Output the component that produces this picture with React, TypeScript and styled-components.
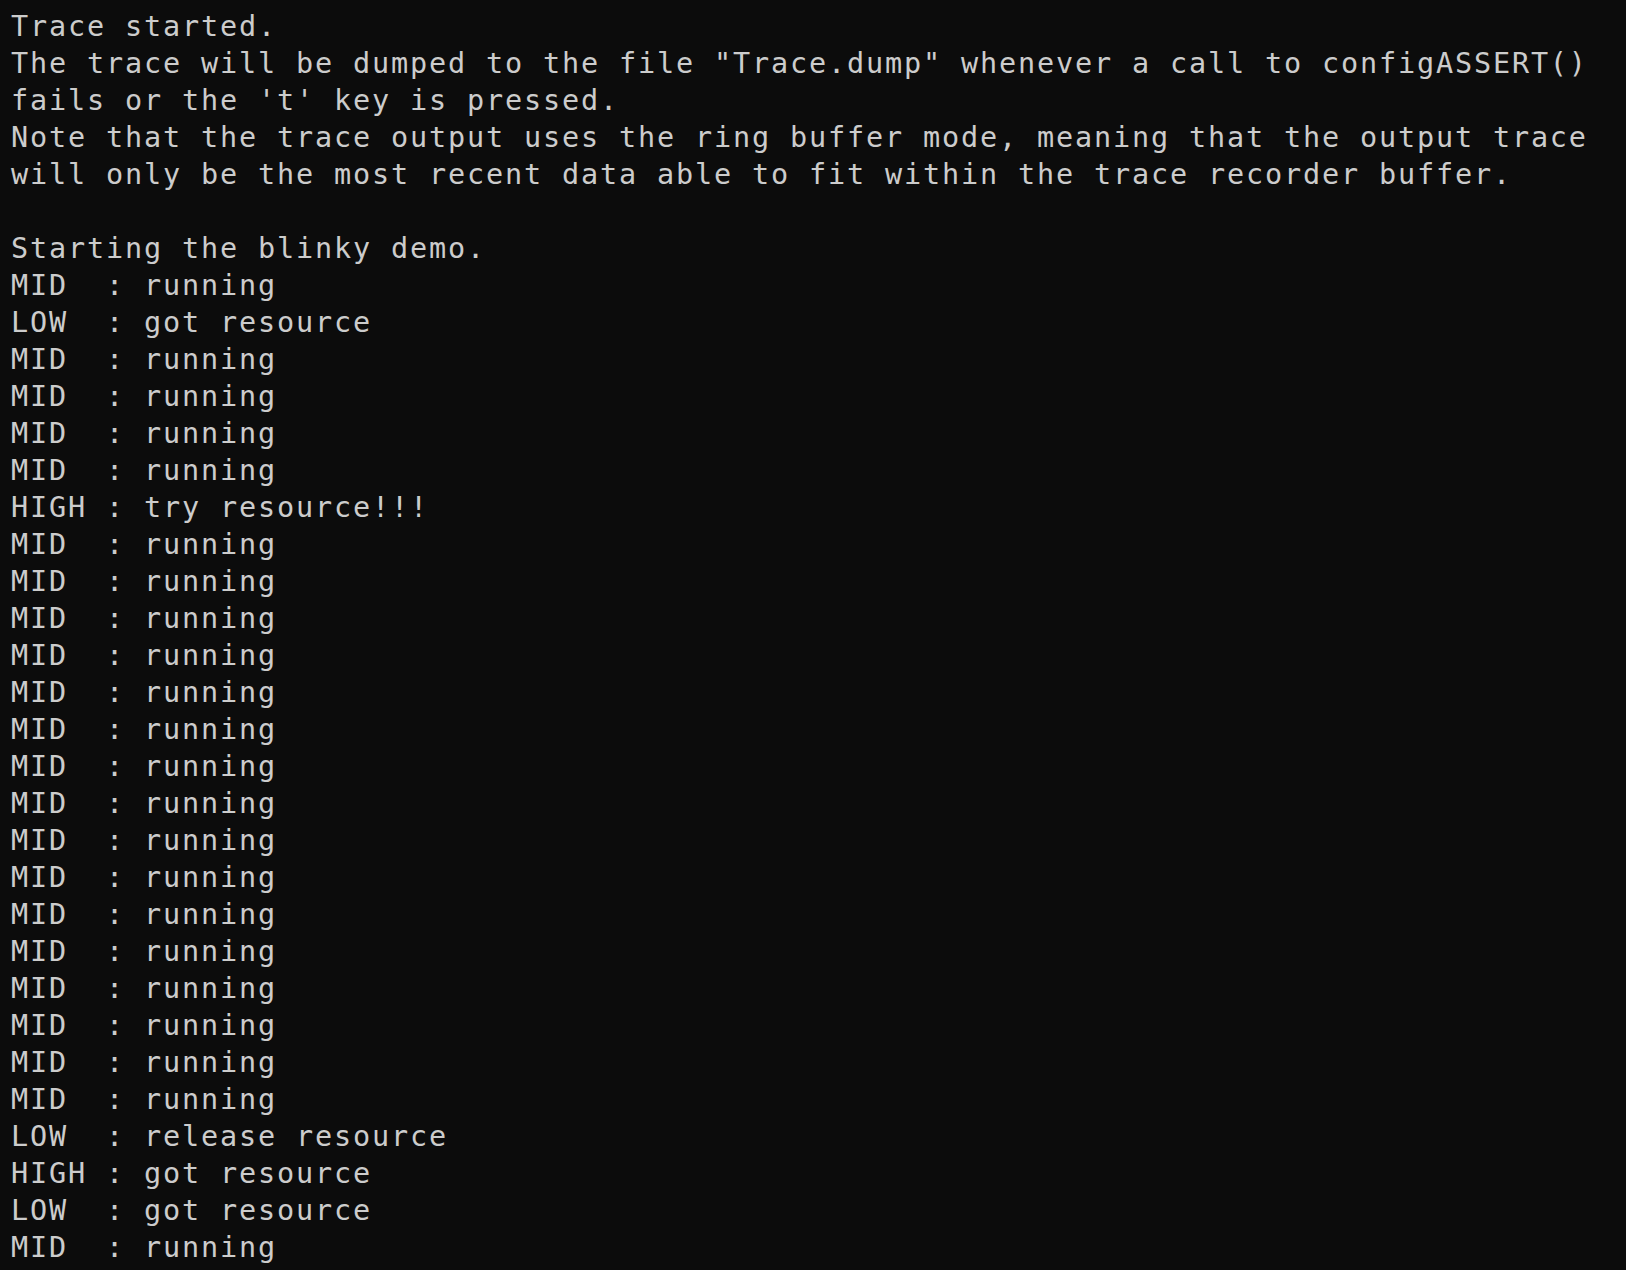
import React from "react";
import styled, { createGlobalStyle } from "styled-components";

const Global = createGlobalStyle`
  html, body {
    margin: 0;
    padding: 0;
    background: #0c0c0c;
    overflow: hidden;
  }
`;

const Terminal = styled.div`
  box-sizing: border-box;
  width: 1626px;
  height: 1270px;
  padding: 8px 0 0 11px;
  background: #0c0c0c;
  color: #cccccc;
  font-family: "DejaVu Sans Mono", "Liberation Mono", monospace;
  font-size: 28.5px;
  letter-spacing: 1.84px;
  line-height: 37px;
  display: flex;
  flex-direction: column;
`;

const Line = styled.div`
  white-space: pre;
  height: 37px;
`;

const header = [
  "Trace started.",
  'The trace will be dumped to the file "Trace.dump" whenever a call to configASSERT()',
  "fails or the 't' key is pressed.",
  "Note that the trace output uses the ring buffer mode, meaning that the output trace",
  "will only be the most recent data able to fit within the trace recorder buffer.",
  "",
  "Starting the blinky demo.",
];

const log: string[] = [
  "MID  : running",
  "LOW  : got resource",
  ...Array(4).fill("MID  : running"),
  "HIGH : try resource!!!",
  ...Array(16).fill("MID  : running"),
  "LOW  : release resource",
  "HIGH : got resource",
  "LOW  : got resource",
  "MID  : running",
];

export default function App() {
  const lines = [...header, ...log];
  return (
    <>
      <Global />
      <Terminal>
        {lines.map((l, i) => (
          <Line key={i}>{l}</Line>
        ))}
      </Terminal>
    </>
  );
}
